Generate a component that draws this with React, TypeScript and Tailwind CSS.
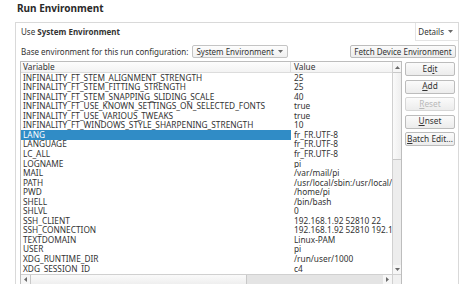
import React from 'react';

const rows: [string, string][] = [
  ['INFINALITY_FT_STEM_ALIGNMENT_STRENGTH', '25'],
  ['INFINALITY_FT_STEM_FITTING_STRENGTH', '25'],
  ['INFINALITY_FT_STEM_SNAPPING_SLIDING_SCALE', '40'],
  ['INFINALITY_FT_USE_KNOWN_SETTINGS_ON_SELECTED_FONTS', 'true'],
  ['INFINALITY_FT_USE_VARIOUS_TWEAKS', 'true'],
  ['INFINALITY_FT_WINDOWS_STYLE_SHARPENING_STRENGTH', '10'],
  ['LANG', 'fr_FR.UTF-8'],
  ['LANGUAGE', 'fr_FR.UTF-8'],
  ['LC_ALL', 'fr_FR.UTF-8'],
  ['LOGNAME', 'pi'],
  ['MAIL', '/var/mail/pi'],
  ['PATH', '/usr/local/sbin:/usr/local/bin:/usr/sbin:/usr/bin'],
  ['PWD', '/home/pi'],
  ['SHELL', '/bin/bash'],
  ['SHLVL', '0'],
  ['SSH_CLIENT', '192.168.1.92 52810 22'],
  ['SSH_CONNECTION', '192.168.1.92 52810 192.168.1.40 22'],
  ['TEXTDOMAIN', 'Linux-PAM'],
  ['USER', 'pi'],
  ['XDG_RUNTIME_DIR', '/run/user/1000'],
  ['XDG_SESSION_ID', 'c4'],
];

const Caret = ({ dir = 'down' }: { dir?: 'down' | 'up' | 'left' | 'right' }) => {
  const pts = {
    down: '0,0 5,0 2.5,3',
    up: '0,3 5,3 2.5,0',
    left: '3,0 3,5 0,2.5',
    right: '0,0 0,5 3,2.5',
  }[dir];
  const vertical = dir === 'down' || dir === 'up';
  return (
    <svg width={vertical ? 5 : 3} height={vertical ? 3 : 5} className="block shrink-0">
      <polygon points={pts} fill="#6a6a6a" />
    </svg>
  );
};

const Btn = ({ children, disabled }: { children: React.ReactNode; disabled?: boolean }) => (
  <div
    className={`h-[14px] flex items-center justify-center rounded-[2px] border bg-gradient-to-b from-[#fbfbfb] to-[#ececec] ${
      disabled ? 'border-[#d6d6d6] text-[#b9b9b9]' : 'border-[#bcbcbc] text-[#333]'
    }`}
  >
    {children}
  </div>
);

const U = ({ children }: { children: React.ReactNode }) => (
  <span className="underline underline-offset-[1px]">{children}</span>
);

export default function App() {
  return (
    <div className="w-[474px] h-[284px] overflow-hidden bg-white flex flex-col font-['Noto_Sans',sans-serif] text-[#333] text-[8.3px] leading-none">
      <div className="h-[22px] pl-[17px] pt-[3px] text-[10px] font-bold text-[#2a2a2a]">Run Environment</div>

      <div className="ml-[15px] w-[444px] flex-1 min-h-0 border border-b-0 border-[#d9d9d9] flex flex-col">
        {/* top row */}
        <div className="h-[18px] flex items-stretch">
          <div className="flex-1 flex items-center pl-[5px] text-[8px]">
            Use&nbsp;<span className="font-bold">System Environment</span>
          </div>
          <div className="w-[43px] flex items-center justify-end gap-[4px] pr-[5px] border-l border-b border-[#e4e4e4] text-[8px]">
            <span>Details</span>
            <Caret />
          </div>
        </div>

        {/* base env row */}
        <div className="mt-[4px] h-[13px] flex items-center pl-[5px] pr-[2px] text-[8px]">
          <span className="whitespace-nowrap">Base environment for this run configuration:</span>
          <div className="ml-[4px] w-[96px] h-[13px] border border-[#c4c4c4] rounded-[2px] bg-gradient-to-b from-[#fdfdfd] to-[#f0f0f0] flex items-center justify-between pl-[3px] pr-[4px] whitespace-nowrap">
            <span>System Environment</span>
            <Caret />
          </div>
          <div className="ml-auto w-[106px] h-[13px] border border-[#bcbcbc] rounded-[2px] bg-gradient-to-b from-[#fbfbfb] to-[#ececec] flex items-center justify-center whitespace-nowrap">
            Fetch Device Environment
          </div>
        </div>

        {/* table + buttons */}
        <div className="mt-[3px] flex flex-1 min-h-0 pl-[4px] pr-[3px]">
          <div className="w-[382px] shrink-0 border border-b-0 border-[#bdbdbd] flex flex-col">
            <div className="h-[215px] flex min-w-0">
              <div className="flex-1 min-w-0 flex flex-col">
                <div className="h-[11px] flex border-b border-[#dcdcdc] bg-gradient-to-b from-[#fdfdfd] to-[#f3f3f3]">
                  <div className="w-[270px] shrink-0 pl-[2px] flex items-center border-r border-[#dcdcdc]">Variable</div>
                  <div className="flex-1 min-w-0 pl-[3px] flex items-center">Value</div>
                </div>
                {rows.map(([k, v], i) => {
                  const sel = k === 'LANG';
                  return (
                    <div key={i} className="h-[9.55px] flex min-w-0">
                      <div
                        className={`w-[270px] shrink-0 pl-[2px] flex items-center whitespace-nowrap overflow-hidden ${
                          sel ? 'bg-[#308cc6] text-white' : ''
                        }`}
                      >
                        {k}
                      </div>
                      <div className="flex-1 min-w-0 pl-[3px] flex items-center whitespace-nowrap overflow-hidden">{v}</div>
                    </div>
                  );
                })}
              </div>
              {/* vertical scrollbar */}
              <div className="w-[9px] shrink-0 border-l border-[#d0d0d0] bg-[#ededed] flex flex-col">
                <div className="h-[10px] flex items-center justify-center bg-[#f6f6f6]">
                  <Caret dir="up" />
                </div>
                <div className="h-[88px] border-y border-[#c8c8c8] bg-gradient-to-r from-[#fafafa] to-[#eeeeee]" />
                <div className="flex-1" />
                <div className="h-[9px] flex items-center justify-center bg-[#f6f6f6]">
                  <Caret dir="down" />
                </div>
              </div>
            </div>
            {/* horizontal scrollbar */}
            <div className="flex-1 flex border-t border-[#d0d0d0] bg-[#e4e4e4]">
              <div className="w-[9px] h-[9px] flex items-center justify-center bg-[#f6f6f6]">
                <Caret dir="left" />
              </div>
              <div className="w-[217px] bg-gradient-to-b from-[#fafafa] to-[#efefef] border-x border-[#c8c8c8]" />
              <div className="flex-1" />
              <div className="w-[9px] h-[9px] flex items-center justify-center bg-[#f6f6f6]">
                <Caret dir="right" />
              </div>
              <div className="w-[9px] bg-[#f0f0f0] border-l border-[#d0d0d0]" />
            </div>
          </div>

          <div className="ml-[3px] w-[50px] flex flex-col gap-[3.5px] pt-[1px]">
            <Btn>Ed<U>i</U>t</Btn>
            <Btn><U>A</U>dd</Btn>
            <Btn disabled><U>R</U>eset</Btn>
            <Btn><U>U</U>nset</Btn>
            <Btn><U>B</U>atch Edit...</Btn>
          </div>
        </div>
      </div>
    </div>
  );
}
